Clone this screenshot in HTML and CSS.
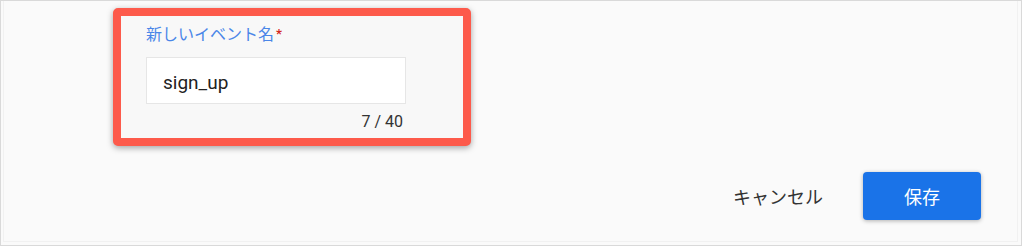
FILE: index.html
```html
<!DOCTYPE html>
<html lang="ja">
<head>
<meta charset="utf-8">
<title>イベント名</title>
<link rel="stylesheet" href="styles.css">
</head>
<body>
<div class="frame">
  <div class="inner">
    <div class="highlight">
      <div class="field">
        <label class="label" for="ev">新しいイベント名<span class="req">*</span></label>
        <input class="input" id="ev" type="text" value="sign_up">
        <div class="counter">7 / 40</div>
      </div>
    </div>
    <div class="actions">
      <button class="btn-text" type="button">キャンセル</button>
      <button class="btn-primary" type="button">保存</button>
    </div>
  </div>
</div>
</body>
</html>
```

FILE: styles.css
```css
* { box-sizing: border-box; }
html, body { margin: 0; padding: 0; background: #ffffff; }
body {
  font-family: Roboto, "Noto Sans CJK JP", sans-serif;
  color: #333333;
}
.frame {
  width: 1022px;
  height: 246px;
  border: 1px solid #d9d9d9;
  background: #fafafa;
  padding: 0 3px 3px 2px;
}
.inner {
  height: 100%;
  border-left: 1px solid #f1f1f1;
  border-right: 1px solid #f1f1f1;
  border-bottom: 1px solid #f1f1f1;
  padding: 7px 36px 0 109px;
  display: flex;
  flex-direction: column;
}
.highlight {
  width: 358px;
  height: 138px;
  border: 8px solid #fd5a4b;
  border-radius: 5px;
  box-shadow: 0 2px 6px rgba(0, 0, 0, 0.35);
  background: #f8f8f8;
  padding: 9px 0 0 25px;
}
.field {
  width: 260px;
  display: flex;
  flex-direction: column;
}
.label {
  font-size: 16px;
  line-height: 20px;
  color: #4a86e8;
  display: flex;
  align-items: flex-start;
}
.req {
  color: #d52a1e;
  font-size: 13px;
  font-weight: 700;
  line-height: 12px;
  margin-left: 2px;
  margin-top: 3px;
}
.input {
  margin-top: 12px;
  width: 260px;
  height: 47px;
  border: 1px solid #e6e6e6;
  background: #ffffff;
  padding: 3px 16px 0 16px;
  font-family: Roboto, "Noto Sans CJK JP", sans-serif;
  font-size: 19px;
  color: #222222;
  outline: none;
}
.counter {
  margin-top: 8px;
  text-align: right;
  padding-right: 3px;
  font-size: 16px;
  line-height: 20px;
  color: #333333;
}
.actions {
  margin-top: 26px;
  display: flex;
  justify-content: flex-end;
  align-items: center;
  gap: 16px;
}
.btn-text {
  border: none;
  background: transparent;
  font-family: Roboto, "Noto Sans CJK JP", sans-serif;
  font-size: 18px;
  color: #333333;
  padding: 0 24px;
  height: 48px;
}
.btn-primary {
  width: 118px;
  height: 48px;
  border: none;
  border-radius: 4px;
  background: #1a73e8;
  color: #ffffff;
  font-family: Roboto, "Noto Sans CJK JP", sans-serif;
  font-size: 18px;
  box-shadow: 0 1px 4px rgba(0, 0, 0, 0.3);
}
```
